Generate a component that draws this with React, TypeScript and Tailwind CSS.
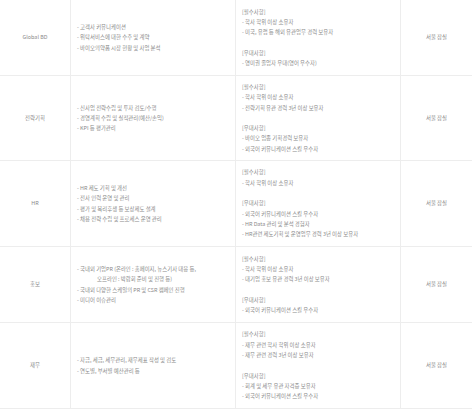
import React from "react";

interface JobRow {
  team: string;
  height: string;
  duties: string[][];
  required: string[];
  preferred: string[];
}

const rows: JobRow[] = [
  {
    team: "Global BD",
    height: "h-[76px]",
    duties: [["- 고객사 커뮤니케이션"], ["- 위탁서비스에 대한 수주 및 계약"], ["- 바이오의약품 시장 현황 및 사업 분석"]],
    required: ["- 학사 학위 이상 소유자", "- 미국, 유럽 등 해외 유관업무 경력 보유자"],
    preferred: ["- 영미권 졸업자 우대(영어 우수자)"],
  },
  {
    team: "전략기획",
    height: "h-[85px]",
    duties: [["- 신사업 전략수립 및 투자 검토/수행"], ["- 경영계획 수립 및 실적관리(예산/손익)"], ["- KPI 등 평가관리"]],
    required: ["- 학사 학위 이상 소유자", "- 전략기획 유관 경력 3년 이상 보유자"],
    preferred: ["- 바이오 업종 기획경력 보유자", "- 외국어 커뮤니케이션 스킬 우수자"],
  },
  {
    team: "HR",
    height: "h-[86px]",
    duties: [
      ["- HR 제도 기획 및 개선"],
      ["- 전사 인력 운영 및 관리"],
      ["- 평가 및 복리후생 등 보상제도 설계"],
      ["- 채용 전략 수립 및 프로세스 운영 관리"],
    ],
    required: ["- 학사 학위 이상 소유자"],
    preferred: ["- 외국어 커뮤니케이션 스킬 우수자", "- HR Data 관리 및 분석 경험자", "- HR관련 제도기획 및 운영업무 경력 3년 이상 보유자"],
  },
  {
    team: "홍보",
    height: "h-[76px]",
    duties: [
      ["- 국내외 기업PR (온라인 : 홈페이지, 뉴스기사 대응 등,", "오프라인 : 박람회 준비 및 진행 등)"],
      ["- 국내외 다양한 스케일의 PR 및 CSR 캠페인 진행"],
      ["- 미디어 이슈관리"],
    ],
    required: ["- 학사 학위 이상 소유자", "- 대기업 홍보 유관 경력 3년 이상 보유자"],
    preferred: ["- 외국어 커뮤니케이션 스킬 우수자"],
  },
  {
    team: "재무",
    height: "h-[86px]",
    duties: [["- 자금, 세금, 세무관리, 재무제표 작성 및 검토"], ["- 연도별, 부서별 예산관리 등"]],
    required: ["- 재무 관련 학사 학위 이상 소유자", "- 재무 관련 경력 3년 이상 보유자"],
    preferred: ["- 회계 및 세무 유관 자격증 보유자", "- 외국어 커뮤니케이션 스킬 우수자"],
  },
];

const App = () => {
  return (
    <div
      className="w-[474px] h-[411px] bg-white text-[#8a8a8a] text-[5.4px] leading-[10.3px]"
      style={{ fontFamily: '"Noto Sans CJK KR", "Noto Sans", sans-serif' }}
    >
      <div className="w-[472px]">
        {rows.map((row) => (
          <div
            key={row.team}
            className={`grid grid-cols-[71px_165px_165px_71px] border-b border-[#ededed] ${row.height}`}
          >
            <div className="flex items-center justify-center border-r border-[#ededed]">
              {row.team}
            </div>
            <div className="flex flex-col justify-center pl-[6px] border-r border-[#ededed]">
              {row.duties.map((lines, i) => (
                <div key={i}>
                  {lines.map((line, j) => (
                    <p key={j} className={j > 0 ? "pl-[20px]" : ""}>
                      {line}
                    </p>
                  ))}
                </div>
              ))}
            </div>
            <div className="flex flex-col justify-center pl-[6px] border-r border-[#ededed]">
              <p>[필수사항]</p>
              {row.required.map((item) => (
                <p key={item}>{item}</p>
              ))}
              <p className="h-[10.3px]" />
              <p>[우대사항]</p>
              {row.preferred.map((item) => (
                <p key={item}>{item}</p>
              ))}
            </div>
            <div className="flex items-center justify-center">서울 잠실</div>
          </div>
        ))}
      </div>
    </div>
  );
};

export default App;
